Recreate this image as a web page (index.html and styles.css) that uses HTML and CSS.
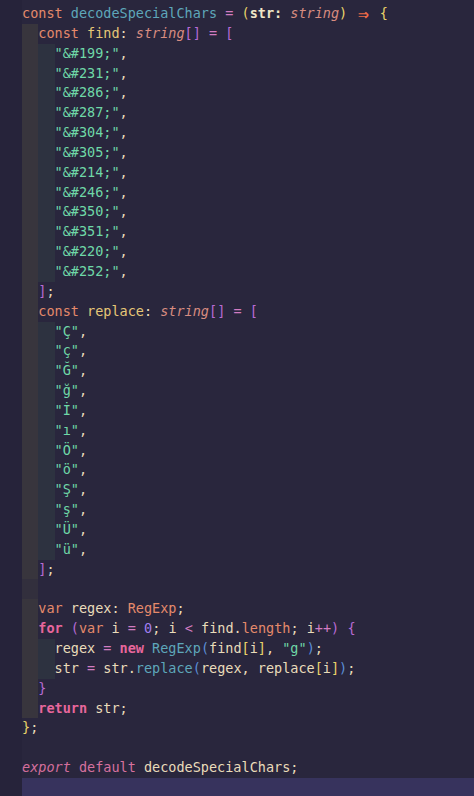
FILE: index.html
```html
<!DOCTYPE html>
<html>
<head>
<meta charset="utf-8">
<link rel="stylesheet" href="styles.css">
</head>
<body>
<div class="editor">
  <div class="gutter"></div>
  <div class="code">
    <div class="line"><span class="k">const</span> <span class="fn">decodeSpecialChars</span> <span class="op">=</span> <span class="py">(</span><span class="vb">str:</span> <span class="t">string</span><span class="py">)</span> <span class="ar">⇒</span> <span class="py">{</span></div>
    <div class="line"><span class="i1">  </span><span class="k">const</span> <span class="dn">find</span><span class="v">:</span> <span class="t">string</span><span class="pp">[]</span> <span class="op">=</span> <span class="pp">[</span></div>
    <div class="line"><span class="i1">  </span><span class="i2">  </span><span class="s">"&amp;#199;"</span><span class="v">,</span></div>
    <div class="line"><span class="i1">  </span><span class="i2">  </span><span class="s">"&amp;#231;"</span><span class="v">,</span></div>
    <div class="line"><span class="i1">  </span><span class="i2">  </span><span class="s">"&amp;#286;"</span><span class="v">,</span></div>
    <div class="line"><span class="i1">  </span><span class="i2">  </span><span class="s">"&amp;#287;"</span><span class="v">,</span></div>
    <div class="line"><span class="i1">  </span><span class="i2">  </span><span class="s">"&amp;#304;"</span><span class="v">,</span></div>
    <div class="line"><span class="i1">  </span><span class="i2">  </span><span class="s">"&amp;#305;"</span><span class="v">,</span></div>
    <div class="line"><span class="i1">  </span><span class="i2">  </span><span class="s">"&amp;#214;"</span><span class="v">,</span></div>
    <div class="line"><span class="i1">  </span><span class="i2">  </span><span class="s">"&amp;#246;"</span><span class="v">,</span></div>
    <div class="line"><span class="i1">  </span><span class="i2">  </span><span class="s">"&amp;#350;"</span><span class="v">,</span></div>
    <div class="line"><span class="i1">  </span><span class="i2">  </span><span class="s">"&amp;#351;"</span><span class="v">,</span></div>
    <div class="line"><span class="i1">  </span><span class="i2">  </span><span class="s">"&amp;#220;"</span><span class="v">,</span></div>
    <div class="line"><span class="i1">  </span><span class="i2">  </span><span class="s">"&amp;#252;"</span><span class="v">,</span></div>
    <div class="line"><span class="i1">  </span><span class="pp">]</span><span class="v">;</span></div>
    <div class="line"><span class="i1">  </span><span class="k">const</span> <span class="dn">replace</span><span class="v">:</span> <span class="t">string</span><span class="pp">[]</span> <span class="op">=</span> <span class="pp">[</span></div>
    <div class="line"><span class="i1">  </span><span class="i2">  </span><span class="s">"Ç"</span><span class="v">,</span></div>
    <div class="line"><span class="i1">  </span><span class="i2">  </span><span class="s">"ç"</span><span class="v">,</span></div>
    <div class="line"><span class="i1">  </span><span class="i2">  </span><span class="s">"Ğ"</span><span class="v">,</span></div>
    <div class="line"><span class="i1">  </span><span class="i2">  </span><span class="s">"ğ"</span><span class="v">,</span></div>
    <div class="line"><span class="i1">  </span><span class="i2">  </span><span class="s">"İ"</span><span class="v">,</span></div>
    <div class="line"><span class="i1">  </span><span class="i2">  </span><span class="s">"ı"</span><span class="v">,</span></div>
    <div class="line"><span class="i1">  </span><span class="i2">  </span><span class="s">"Ö"</span><span class="v">,</span></div>
    <div class="line"><span class="i1">  </span><span class="i2">  </span><span class="s">"ö"</span><span class="v">,</span></div>
    <div class="line"><span class="i1">  </span><span class="i2">  </span><span class="s">"Ş"</span><span class="v">,</span></div>
    <div class="line"><span class="i1">  </span><span class="i2">  </span><span class="s">"ş"</span><span class="v">,</span></div>
    <div class="line"><span class="i1">  </span><span class="i2">  </span><span class="s">"Ü"</span><span class="v">,</span></div>
    <div class="line"><span class="i1">  </span><span class="i2">  </span><span class="s">"ü"</span><span class="v">,</span></div>
    <div class="line"><span class="i1">  </span><span class="pp">]</span><span class="v">;</span></div>
    <div class="line"><span class="i1 blank">  </span></div>
    <div class="line"><span class="i1">  </span><span class="k">var</span> <span class="v">regex:</span> <span class="k">RegExp</span><span class="v">;</span></div>
    <div class="line"><span class="i1">  </span><span class="kw">for</span> <span class="pp">(</span><span class="k">var</span> <span class="v">i</span> <span class="op">=</span> <span class="num">0</span><span class="v">;</span> <span class="v">i</span> <span class="op">&lt;</span> <span class="v">find.</span><span class="k">length</span><span class="v">;</span> <span class="v">i</span><span class="op">++</span><span class="pp">)</span> <span class="pp">{</span></div>
    <div class="line"><span class="i1">  </span><span class="i2">  </span><span class="v">regex</span> <span class="op">=</span> <span class="kw">new</span> <span class="fn">RegExp</span><span class="pb">(</span><span class="v">find</span><span class="py">[</span><span class="v">i</span><span class="py">]</span><span class="v">,</span> <span class="s">"g"</span><span class="pb">)</span><span class="v">;</span></div>
    <div class="line"><span class="i1">  </span><span class="i2">  </span><span class="v">str</span> <span class="op">=</span> <span class="v">str.</span><span class="fn">replace</span><span class="pb">(</span><span class="v">regex, replace</span><span class="py">[</span><span class="v">i</span><span class="py">]</span><span class="pb">)</span><span class="v">;</span></div>
    <div class="line"><span class="i1">  </span><span class="pp">}</span></div>
    <div class="line"><span class="i1">  </span><span class="kw">return</span> <span class="v">str;</span></div>
    <div class="line"><span class="py">}</span><span class="v">;</span></div>
    <div class="line"></div>
    <div class="line"><span class="ex">export</span> <span class="df">default</span> <span class="v">decodeSpecialChars;</span></div>
    <div class="line current"></div>
  </div>
</div>
</body>
</html>
```
FILE: styles.css
```css
html, body {
  margin: 0;
  padding: 0;
  background: #29263d;
  height: 100%;
  overflow: hidden;
}

.editor {
  display: flex;
  min-height: 100%;
  font-family: "DejaVu Sans Mono", "Liberation Mono", monospace;
  font-size: 13.5px;
  color: #e8dcbc;
}

.gutter {
  width: 22px;
  flex: none;
  background: #26233a;
}

.code {
  flex: 1;
  padding-top: 4px;
}

.line {
  height: 19.85px;
  line-height: 19.85px;
  white-space: pre;
}

.line.current {
  background: #37335d;
}

.i1, .i2 {
  display: inline-block;
  width: 16.26px;
  height: 19.85px;
  vertical-align: top;
}

.i1 { background: rgba(255, 255, 64, 0.07); }
.i2 { background: rgba(127, 255, 127, 0.06); }
.i1.blank { background: rgba(255, 255, 64, 0.045); }

.k { color: #e58a6b; }
.fn { color: #5ea7ba; }
.op { color: #d27cc2; }
.py { color: #ead46a; }
.pp { color: #b86bd4; }
.pb { color: #5c8fd6; }
.v { color: #e9dcba; }
.vb { color: #f0e6c8; font-weight: bold; }
.t { color: #d88c80; font-style: italic; }
.dn { color: #e6c677; }
.s { color: #6fd8a8; }
.kw { color: #e8669c; font-weight: bold; }
.num { color: #a17ff0; }
.ar {
  color: #f06b48;
  display: inline-block;
  width: 16.26px;
  height: 19.85px;
  vertical-align: top;
  text-align: center;
  font-size: 18px;
  font-weight: bold;
  line-height: 19px;
}
.ex { color: #d46e9c; font-style: italic; }
.df { color: #d6719f; }
```
